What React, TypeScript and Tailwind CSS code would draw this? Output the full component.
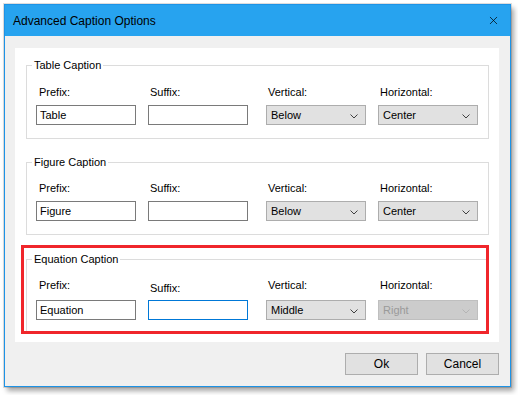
import { X } from 'lucide-react';

function Chevron({ disabled }: { disabled?: boolean }) {
  return (
    <svg width="8" height="5" viewBox="0 0 8 5" className="absolute right-[7px] top-[8px]">
      <path
        d="M0.5 0.5 L4 4 L7.5 0.5"
        fill="none"
        stroke={disabled ? '#b4b4b4' : '#404040'}
        strokeWidth="1"
      />
    </svg>
  );
}

function TextBox({ value, focused }: { value: string; focused?: boolean }) {
  return (
    <div
      className={
        focused
          ? 'h-[20px] w-[100px] border border-[#0078d7] bg-white pl-[3px] text-[11px] leading-[18px] text-black'
          : 'h-[20px] w-[100px] border border-[#7a7a7a] bg-white pl-[3px] text-[11px] leading-[18px] text-black'
      }
    >
      {value}
    </div>
  );
}

function Combo({ value, disabled }: { value: string; disabled?: boolean }) {
  return (
    <div
      className={
        disabled
          ? 'relative h-[20px] w-[100px] border border-[#bfbfbf] bg-[#cccccc] pl-[4px] text-[11px] leading-[18px] text-[#9a9a9a]'
          : 'relative h-[20px] w-[100px] border border-[#adadad] bg-[#e1e1e1] pl-[4px] text-[11px] leading-[18px] text-black'
      }
    >
      {value}
      <Chevron disabled={disabled} />
    </div>
  );
}

type GroupProps = {
  title: string;
  prefix: string;
  vertical: string;
  horizontal: string;
  equation?: boolean;
  className: string;
  labelTop: string;
};

function CaptionGroup({ title, prefix, vertical, horizontal, equation, className, labelTop }: GroupProps) {
  return (
    <fieldset className={`w-[463px] border border-[#dcdcdc] pl-[9px] pb-[13px] ${className}`}>
      <legend className="ml-[-4px] px-[2px] text-[11px] leading-[14px] text-black">{title}</legend>
      <div className={`flex text-[11px] leading-[14px] text-black ${labelTop}`}>
        <div className="w-[112px] pl-[3px]">Prefix:</div>
        <div className={equation ? 'mt-[3px] w-[118px] pl-[2px]' : 'w-[118px] pl-[2px]'}>Suffix:</div>
        <div className="w-[112px] pl-[2px]">Vertical:</div>
        <div className="pl-[2px]">Horizontal:</div>
      </div>
      <div className={equation ? 'mt-[5px] flex' : 'mt-[6px] flex'}>
        <div className="w-[112px]">
          <TextBox value={prefix} />
        </div>
        <div className="w-[118px]">
          <TextBox value="" focused={equation} />
        </div>
        <div className="w-[112px]">
          <Combo value={vertical} />
        </div>
        <Combo value={horizontal} disabled={equation} />
      </div>
    </fieldset>
  );
}

export default function App() {
  return (
    <div className="h-[395px] w-[518px] bg-white pl-[4px] pt-[4px] font-['Liberation_Sans',Arial,sans-serif]">
      <div className="flex h-[383px] w-[507px] flex-col border border-[#1d93e6] shadow-[0_0_0_1px_rgba(0,0,0,0.12),3px_4px_5px_rgba(0,0,0,0.35)]">
        {/* title bar */}
        <div className="flex h-[31px] items-center justify-between bg-[#27a3ef] pl-[8px] pr-[10px]">
          <span className="text-[12px] leading-[16px] text-black">Advanced Caption Options</span>
          <X size={13} strokeWidth={1.3} className="text-black" />
        </div>

        {/* client area */}
        <div className="flex flex-1 flex-col bg-[#f0f0f0] pl-[10px] pt-[12px]">
          <div className="relative h-[294px] w-[484px] bg-white pl-[11px] pt-[10px]">
            <CaptionGroup
              title="Table Caption"
              prefix="Table"
              vertical="Below"
              horizontal="Center"
              className=""
              labelTop="mt-[13px]"
            />
            <CaptionGroup
              title="Figure Caption"
              prefix="Figure"
              vertical="Below"
              horizontal="Center"
              className="mt-[16px]"
              labelTop="mt-[12px]"
            />
            <CaptionGroup
              title="Equation Caption"
              prefix="Equation"
              vertical="Middle"
              horizontal="Right"
              equation
              className="mt-[17px]"
              labelTop="mt-[12px]"
            />
            {/* highlight annotation */}
            <div className="pointer-events-none absolute left-[6px] top-[197px] h-[89px] w-[468px] border-[3px] border-[#f0262b]" />
          </div>

          <div className="mt-[11px] flex w-[484px] justify-end gap-[8px]">
            <button
              type="button"
              className="h-[22px] w-[73px] border border-[#adadad] bg-[#e1e1e1] text-[12px] text-black"
            >
              Ok
            </button>
            <button
              type="button"
              className="h-[22px] w-[73px] border border-[#adadad] bg-[#e1e1e1] text-[12px] text-black"
            >
              Cancel
            </button>
          </div>
        </div>
      </div>
    </div>
  );
}
